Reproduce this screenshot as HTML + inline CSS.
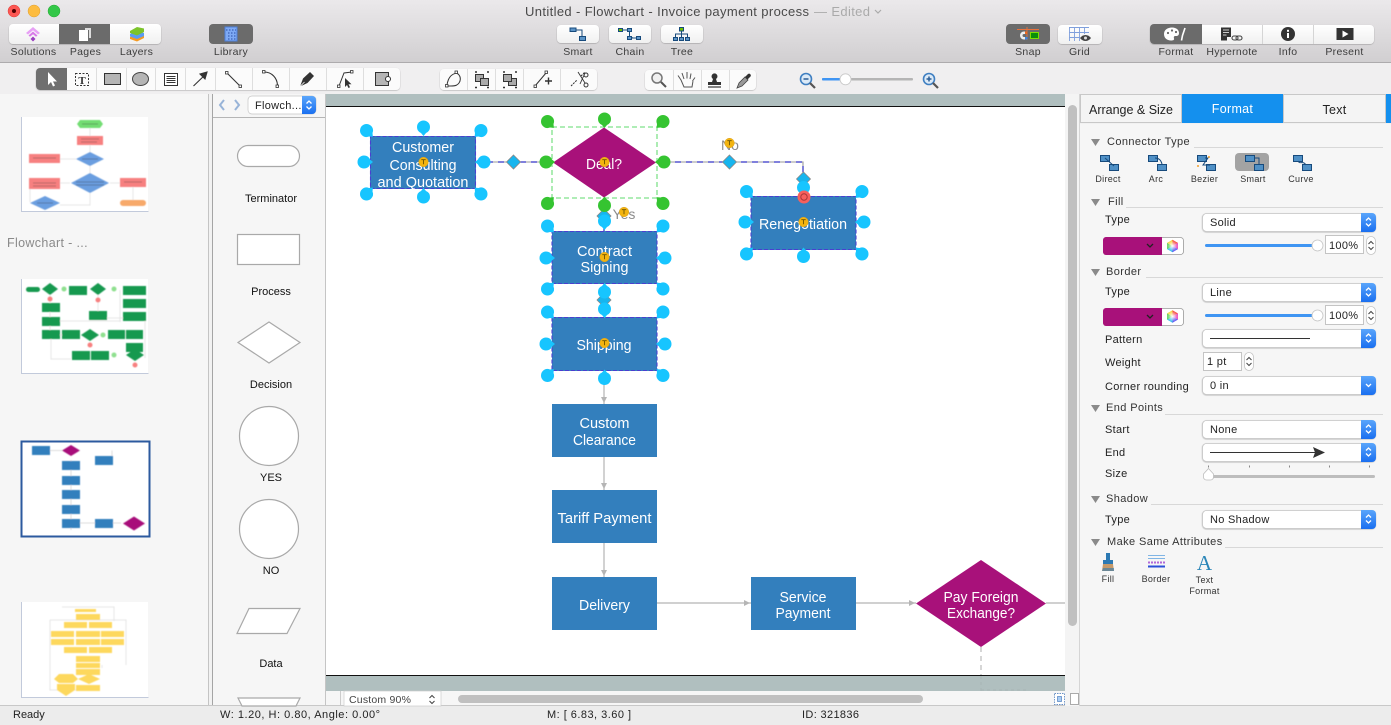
<!DOCTYPE html>
<html><head><meta charset="utf-8"><title>Flowchart</title>
<style>
html,body{margin:0;padding:0;background:#f6f6f6;width:1391px;height:725px;overflow:hidden}
svg{display:block;position:absolute;left:0;top:0}
text{font-family:"Liberation Sans",sans-serif;}
.tb{font-size:10.5px;fill:#3c3c3c;text-anchor:middle;letter-spacing:.3px}
.p{font-size:11px;fill:#222;letter-spacing:.3px}
.h{font-size:11px;fill:#333;letter-spacing:.4px}
.s{font-size:9px;fill:#333;text-anchor:middle;letter-spacing:.3px}
.l{font-size:11px;fill:#111;text-anchor:middle}
.n{font-size:15px;fill:#fff;text-anchor:middle}
.st{font-size:11px;fill:#222}
</style></head><body>
<svg width="1391" height="725" viewBox="0 0 1391 725" xmlns="http://www.w3.org/2000/svg">
<defs>
<linearGradient id="tg" x1="0" y1="0" x2="0" y2="1"><stop offset="0" stop-color="#ebe9eb"/><stop offset="1" stop-color="#d1cfd1"/></linearGradient>
<linearGradient id="bg" x1="0" y1="0" x2="0" y2="1"><stop offset="0" stop-color="#fff"/><stop offset="1" stop-color="#f0f0f0"/></linearGradient>
<linearGradient id="sb" x1="0" y1="0" x2="0" y2="1"><stop offset="0" stop-color="#5aa5fb"/><stop offset="1" stop-color="#1a6ff0"/></linearGradient>
<filter id="bl"><feGaussianBlur stdDeviation=".45"/></filter>
<filter id="sh" x="-5%" y="-20%" width="110%" height="140%"><feDropShadow dx="0" dy=".5" stdDeviation=".4" flood-color="#000" flood-opacity=".3"/></filter>
<g id="d"><path d="M-6.5 0a6.5 6.5 0 1 1 13 0a6.5 6.5 0 0 1-4 6l-2.500 3-2.500-3a6.500 6.500 0 0 1-4-6z"/></g>
<g id="T"><circle r="4.800" fill="#f3b40f" stroke="#d9a020" stroke-width=".5"/><path d="M-2.200-2.300h4.400M0-2.300v4.600" stroke="#6b5200" stroke-width=".9" fill="none"/></g>
<g id="dm"><path d="M0-7L7 0 0 7-7 0z" fill="#17b5ee" stroke="#888" stroke-width=".8"/></g>
<g id="updn"><path d="M-2.500-1.500L0-4l2.500 2.500M-2.500 1.500L0 4l2.500-2.500" fill="none" stroke="#fff" stroke-width="1.300"/></g>
<g id="updd"><path d="M-2.500-1.500L0-4l2.500 2.500M-2.500 1.500L0 4l2.500-2.500" fill="none" stroke="#444" stroke-width="1"/></g>
<g id="bx"><rect width="9" height="6" fill="#4f90c6" stroke="#174a7c"/></g>
<radialGradient id="wc"><stop offset="0" stop-color="#fff"/><stop offset=".3" stop-color="#fff" stop-opacity=".7"/><stop offset="1" stop-color="#fff" stop-opacity="0"/></radialGradient>
<g id="wh">
<path d="M0 0L0-6.200 5.400-3.100z" fill="#f5352b"/><path d="M0 0L5.400-3.100 5.400 3.100z" fill="#e32bb0"/><path d="M0 0L5.400 3.100 0 6.200z" fill="#4a3ff0"/><path d="M0 0L0 6.200-5.400 3.100z" fill="#1fb5e8"/><path d="M0 0L-5.400 3.100-5.400-3.100z" fill="#3fc83f"/><path d="M0 0L-5.400-3.100 0-6.200z" fill="#f5d12b"/>
<circle r="6.100" fill="url(#wc)"/>
</g>
</defs>

<!-- base bands -->
<rect width="1391" height="62" fill="url(#tg)"/>
<rect y="62" width="1391" height="1" fill="#adabad"/>
<rect y="63" width="1391" height="31" fill="#f0eff0"/>
<rect y="94" width="1391" height="612" fill="#f6f6f6"/>
<rect y="706" width="1391" height="19" fill="#ececec"/>

<!-- traffic lights -->
<circle cx="14" cy="11" r="6" fill="#fc5753" stroke="#df3d38" stroke-width=".5"/><circle cx="14" cy="11" r="2" fill="#4d0000"/>
<circle cx="34" cy="11" r="6" fill="#fdbc40" stroke="#de9f34" stroke-width=".5"/>
<circle cx="54" cy="11" r="6" fill="#33c748" stroke="#27aa35" stroke-width=".5"/>
<text x="525" y="16" font-size="13" fill="#4a4a4a" textLength="284" lengthAdjust="spacing">Untitled - Flowchart - Invoice payment process</text>
<text x="814" y="16" font-size="13" fill="#aaa" textLength="56" lengthAdjust="spacing">— Edited</text>
<path d="M875 10l3 3 3-3" fill="none" stroke="#aaa" stroke-width="1.200"/>

<!-- main toolbar buttons -->
<rect x="9" y="24" width="152" height="20" rx="4" fill="url(#bg)" filter="url(#sh)"/>
<rect x="59" y="24" width="51" height="20" fill="#6b6b6b"/>
<rect x="209" y="24" width="44" height="20" rx="4" fill="#6b6b6b"/>
<rect x="557" y="25" width="42" height="18" rx="4" fill="url(#bg)" filter="url(#sh)"/>
<rect x="609" y="25" width="42" height="18" rx="4" fill="url(#bg)" filter="url(#sh)"/>
<rect x="661" y="25" width="42" height="18" rx="4" fill="url(#bg)" filter="url(#sh)"/>
<rect x="1006" y="24" width="44" height="20" rx="4" fill="#6b6b6b"/>
<rect x="1058" y="25" width="44" height="19" rx="4" fill="url(#bg)" filter="url(#sh)"/>
<rect x="1150" y="25" width="224" height="19" rx="4" fill="url(#bg)" filter="url(#sh)"/>
<path d="M1154 24h48v20h-48a4 4 0 0 1-4-4v-12a4 4 0 0 1 4-4z" fill="#6b6b6b"/>
<path d="M1262.500 25v19M1313.500 25v19" stroke="#d5d5d5"/>

<!-- solutions icon -->
<path d="M33 27l7 6-2 1.500-5-4.200-5 4.200-2-1.500z" fill="#e7a0f5"/>
<path d="M33 31.500l4.500 4-1.500 1.200-3-2.500-3 2.500-1.500-1.200z" fill="#d77ae8"/>
<path d="M33 36.500l2.500 2.500-2.500 2.500-2.500-2.500z" fill="#9b3fc0"/>
<!-- pages -->
<path d="M85 28h6v10h-2V30h-4z" fill="#ddd"/><path d="M79 30h9v11h-9z" fill="#fff"/>
<!-- layers -->
<path d="M130 37l7-3 7 2v2l-7 3.500-7-2.500z" fill="#f59a23"/><path d="M130 34l7-3 7 2v3l-7 3-7-2.500z" fill="#5b9bf5"/><path d="M130 31l7-4 7 1.500V32l-7 3.500-7-2.500z" fill="#7cc42b"/>
<!-- library -->
<rect x="225" y="27" width="12" height="14" fill="#7eaaf5" stroke="#4d7fd8"/>
<path d="M226 30h10" stroke="#2a4fa8" stroke-width=".9" stroke-dasharray="1.500 1.500"/>
<path d="M228 33h8M228 36h8M228 39h8" stroke="#2a4fa8" stroke-width=".9" stroke-dasharray="1.500 1.500"/>
<!-- smart -->
<rect x="570" y="28" width="6" height="3.500" fill="#5c94c7" stroke="#174a7c"/><path d="M576 30h6v6" fill="none" stroke="#174a7c"/><rect x="579.500" y="36.500" width="6" height="4" fill="#5c94c7" stroke="#174a7c"/>
<!-- chain -->
<rect x="618.500" y="28.500" width="4" height="3" fill="#6fc000" stroke="#174a7c"/><rect x="627.500" y="28.500" width="4" height="3" fill="#5c94c7" stroke="#174a7c"/><path d="M622 30h5M629.500 31.500v6h3" stroke="#174a7c" fill="none"/><rect x="627.500" y="36.500" width="4" height="3" fill="#5c94c7" stroke="#174a7c"/><rect x="636.500" y="36.500" width="4" height="3" fill="#5c94c7" stroke="#174a7c"/><path d="M631.500 38h5" stroke="#174a7c"/>
<!-- tree -->
<rect x="679.500" y="27.500" width="4" height="3.500" fill="#6fc000" stroke="#174a7c"/><path d="M681.500 31v3M675.500 37v-3h12v3M681.500 34v3" fill="none" stroke="#174a7c"/><rect x="673.500" y="37.500" width="4" height="3" fill="#5c94c7" stroke="#174a7c"/><rect x="679.500" y="37.500" width="4" height="3" fill="#5c94c7" stroke="#174a7c"/><rect x="685.500" y="37.500" width="4" height="3" fill="#5c94c7" stroke="#174a7c"/>
<!-- snap -->
<path d="M1017 29.500h22M1027 27v13" stroke="#e8713c" stroke-width=".9"/>
<path d="M1027 31.500h-3a4 4 0 0 0 0 8h3v-2.500h-3a1.500 1.500 0 0 1 0-3h3z" fill="#eee"/><rect x="1025" y="31.500" width="2.500" height="2.500" fill="#f06a1e"/><rect x="1025" y="37" width="2.500" height="2.500" fill="#3f86e0"/>
<rect x="1030.500" y="32.500" width="8" height="6" fill="#0a8f0a" stroke="#7fe000"/>
<!-- grid -->
<path d="M1069.500 27v14M1074.500 27v14M1079.500 27v14M1084.500 27v7M1069 27.500h20M1069 32.500h20M1069 37.500h11" stroke="#7f9fdc" stroke-width=".9"/>
<path d="M1080 38c3-4 8-4 11 0-3 4-8 4-11 0z" fill="#444"/><circle cx="1085.500" cy="38" r="1.500" fill="#ddd"/>
<!-- format -->
<path d="M1164 34c0-4 3.500-6.500 8-6.500s7 2.500 7 5.500-2 3-3.500 3-2 1-1.500 2.500-1 2-3 2c-4 0-7-2.500-7-6.500z" fill="#fff"/>
<circle cx="1168" cy="33" r="1.100" fill="#666"/><circle cx="1172" cy="30.500" r="1.100" fill="#666"/><circle cx="1176" cy="32" r="1.100" fill="#666"/>
<path d="M1185 28l-2.500 7.500-1 5" stroke="#fff" stroke-width="1.600" fill="none"/>
<!-- hypernote -->
<path d="M1221 27.500h10V37h-4v3.500h-6z" fill="#333"/><path d="M1223 30h6M1223 32.500h6M1223 35h3.500" stroke="#fff" stroke-width=".8"/>
<rect x="1232" y="36" width="6" height="4" rx="2" fill="none" stroke="#444" stroke-width="1.100"/><rect x="1236" y="36" width="6" height="4" rx="2" fill="none" stroke="#444" stroke-width="1.100"/>
<!-- info -->
<circle cx="1288" cy="34" r="7" fill="#333"/><rect x="1287" y="33" width="2" height="5" fill="#fff"/><rect x="1287" y="29.800" width="2" height="2" fill="#fff"/>
<!-- present -->
<rect x="1336.500" y="28" width="17" height="12" fill="#333"/><path d="M1342.500 30.500l6 3.500-6 3.500z" fill="#fff"/>

<text x="33.500" y="55" class="tb">Solutions</text><text x="85.500" y="55" class="tb">Pages</text><text x="136.500" y="55" class="tb">Layers</text><text x="231" y="55" class="tb">Library</text>
<text x="578" y="55" class="tb">Smart</text><text x="630" y="55" class="tb">Chain</text><text x="682" y="55" class="tb">Tree</text>
<text x="1028" y="55" class="tb">Snap</text><text x="1079.500" y="55" class="tb">Grid</text><text x="1176" y="55" class="tb">Format</text><text x="1232" y="55" class="tb">Hypernote</text><text x="1288" y="55" class="tb">Info</text><text x="1344.500" y="55" class="tb">Present</text>

<!-- second toolbar -->
<g filter="url(#sh)"><rect x="36" y="68" width="364" height="22" rx="4" fill="#fbfbfb"/><rect x="440" y="69" width="157" height="21" rx="4" fill="#fbfbfb"/><rect x="645" y="70" width="111" height="20" rx="4" fill="#fbfbfb"/></g>
<path d="M40 68h27v22H40a4 4 0 0 1-4-4V72a4 4 0 0 1 4-4z" fill="#6f6f6f"/>
<path d="M96.500 68v22M126.500 68v22M155.500 68v22M185.500 68v22M215.500 68v22M252.500 68v22M289.500 68v22M326.500 68v22M363.500 68v22M467.500 69v21M495.500 69v21M523.500 69v21M560.500 69v21M673.500 70v20M701.500 70v20M729.500 70v20" stroke="#dedede"/>
<path d="M48 72v13l3-3 2 4.500 2-1-2-4h4z" fill="#fff"/>
<rect x="75.500" y="73.500" width="13" height="12" fill="none" stroke="#333" stroke-dasharray="2 1.500"/><text x="82" y="84" font-size="11" font-weight="bold" fill="#333" text-anchor="middle" style="font-family:'Liberation Serif',serif">T</text>
<rect x="104.500" y="73.500" width="16" height="11" fill="#b5b5b5" stroke="#333"/>
<ellipse cx="140.500" cy="79" rx="8" ry="6.500" fill="#b5b5b5" stroke="#444"/>
<rect x="164.500" y="73.500" width="13" height="12" fill="#fff" stroke="#333"/><path d="M166.500 76.500h9M166.500 78.500h9M166.500 80.500h9M166.500 82.500h9" stroke="#333" stroke-width=".9"/>
<path d="M193.500 86L207 73M207 72l-7 2 5 5z" fill="#333" stroke="#333" stroke-width="1.100"/>
<path d="M227 73l13 13" stroke="#333" stroke-width="1.100"/><rect x="225.500" y="71.500" width="2.500" height="2.500" fill="#fff" stroke="#333" stroke-width=".8"/><rect x="239" y="85" width="2.500" height="2.500" fill="#fff" stroke="#333" stroke-width=".8"/>
<path d="M264 72c8 0 13 6 13.500 13" fill="none" stroke="#333" stroke-width="1.100"/><rect x="262.500" y="70.500" width="2.500" height="2.500" fill="#fff" stroke="#333" stroke-width=".8"/><rect x="276" y="85" width="2.500" height="2.500" fill="#fff" stroke="#333" stroke-width=".8"/>
<path d="M300 86.500l3-8 7-6.500 4 4-6.500 7z" fill="#333"/><path d="M300 86.500l4.500-4.500" stroke="#fff" stroke-width=".8"/>
<path d="M339 86l5-13 8-1" fill="none" stroke="#333"/><rect x="337.500" y="85" width="2.500" height="2.500" fill="#fff" stroke="#333" stroke-width=".8"/><rect x="350.500" y="70.500" width="2.500" height="2.500" fill="#fff" stroke="#333" stroke-width=".8"/><path d="M345 78v9l2-2 1.500 3 1.500-.7-1.500-3h3z" fill="#333"/>
<rect x="375.500" y="72.500" width="13" height="13" fill="#b5b5b5" stroke="#333"/><circle cx="388" cy="79" r="2.500" fill="#fff" stroke="#333"/>
<path d="M447 86c0-4 2-9 5-11s5-2.500 7 0 1.500 6 0 8-3 3-8 3z" fill="none" stroke="#333"/><rect x="445.500" y="84.500" width="2.500" height="2.500" fill="#fff" stroke="#333" stroke-width=".8"/><rect x="455" y="71" width="2.500" height="2.500" fill="#fff" stroke="#333" stroke-width=".8"/>
<rect x="475.500" y="74.500" width="8" height="7" fill="#aaa" stroke="#333"/><rect x="480.500" y="78.500" width="8" height="7" fill="#aaa" stroke="#333"/><path d="M475 72h2M487 72h2M475 87.500h2M487 87.500h2" stroke="#333" stroke-width="1.500"/>
<rect x="508.500" y="78.500" width="8" height="7" fill="#aaa" stroke="#333"/><rect x="503.500" y="74.500" width="8" height="7" fill="#aaa" stroke="#333"/><path d="M503 72h2M515 72h2M503 87.500h2M515 87.500h2" stroke="#333" stroke-width="1.500"/>
<path d="M535 86l11-13" stroke="#333"/><rect x="534" y="85" width="2.500" height="2.500" fill="#fff" stroke="#333" stroke-width=".8"/><rect x="545" y="71" width="2.500" height="2.500" fill="#fff" stroke="#333" stroke-width=".8"/><path d="M545 81h7M548.500 77.500v7" stroke="#333" stroke-width="1.400"/>
<path d="M571 86l6-6M581 76l4-4" stroke="#333" stroke-dasharray="2 1"/><circle cx="586" cy="75" r="2" fill="none" stroke="#333"/><circle cx="586" cy="85" r="2" fill="none" stroke="#333"/><path d="M578 72l7 11M585 73l-5 11" stroke="#333" stroke-width=".9"/>
<circle cx="657" cy="78" r="5" fill="#f0f0f0" stroke="#777" stroke-width="1.500"/><path d="M661 82l5 5" stroke="#555" stroke-width="2"/>
<path d="M681 80l-3-4.500M684 79l-2-6M687 78.500V72M690 79l1-5.500M692.500 81l2.500-3.500M681 80l3 7h8l1-6" stroke="#555" fill="none"/>
<path d="M708 87h13" stroke="#333" stroke-width="1.200"/><path d="M708 85v-3h4l1-3a3 3 0 1 1 3 0l1 3h4v3z" fill="#333"/>
<path d="M737 88l2-5 6-6 3 3-6 6z" fill="#999" stroke="#444" stroke-width=".8"/><path d="M745 77l3-3a1.800 1.800 0 0 1 2.500 2.500l-3 3z" fill="#333"/>
<!-- zoom slider -->
<circle cx="806" cy="79" r="5.500" fill="#dceaf7" stroke="#3f7fc1" stroke-width="1.600"/><path d="M803.500 79h5" stroke="#2b5d96" stroke-width="1.500"/><path d="M810 83l5 5" stroke="#555" stroke-width="2.200"/>
<rect x="822" y="78" width="91" height="2.500" rx="1" fill="#b5b5b5"/><rect x="822" y="78" width="20" height="2.500" rx="1" fill="#3f95f3"/><circle cx="845.500" cy="79.300" r="5.500" fill="#fff" stroke="#c8c8c8" stroke-width=".8"/>
<circle cx="929" cy="79" r="5.500" fill="#dceaf7" stroke="#3f7fc1" stroke-width="1.600"/><path d="M926.500 79h5M929 76.500v5" stroke="#2b5d96" stroke-width="1.500"/><path d="M933 83l5 5" stroke="#555" stroke-width="2.200"/>

<!-- panels -->
<rect x="208" y="94" width="1" height="612" fill="#c4c4c4"/>
<rect x="209" y="94" width="3" height="612" fill="#f2f2f2"/>
<rect x="212" y="94" width="1" height="612" fill="#a5a5a5"/>
<rect x="325" y="94" width="1" height="612" fill="#c5c5c5"/>
<rect x="0" y="705" width="1391" height="1" fill="#c8c8c8"/>
<rect x="213" y="117" width="112" height="1" fill="#b5b5b5"/>

<!-- page thumbs -->
<text x="7" y="247" font-size="12.500" fill="#8a8a8a" letter-spacing=".35">Flowchart - ...</text>
<rect x="21" y="117" width="127" height="94" fill="#fff"/><path d="M21.500 117v94.500H148.500" fill="none" stroke="#c2cadb"/>
<g filter="url(#bl)">
<path d="M90 128v45M60 159h16M60 183h10M110 183h10M133 187v13M90 193v12H60M30 188v14" stroke="#e6e6e6" fill="none"/>
<path d="M77 124l3-4h20l3 4-3 4H80z" fill="#73dd73"/><rect x="77" y="136" width="26" height="9" fill="#f78080"/><path d="M76 159l14-7 14 7-14 7z" fill="#6b9ee0"/><rect x="29" y="154" width="31" height="9" fill="#f78080"/><path d="M71 183l19-10 19 10-19 10z" fill="#6b9ee0"/><rect x="29" y="178" width="31" height="11" fill="#f78080"/><rect x="120" y="178" width="26" height="9" fill="#f78080"/><path d="M30 203l15-7 15 7-15 7z" fill="#6b9ee0"/><rect x="120" y="200" width="26" height="6" rx="3" fill="#f7a96b"/>
<path d="M82 124h16M81 139h18M81 142h16M82 159h16M33 158h23M76 182h28M76 185h28M33 183h23M33 186h23M124 182h18M37 203h16" stroke="#333" stroke-width=".7" opacity=".45" fill="none"/>
</g>
<rect x="21" y="279" width="127" height="94" fill="#fff"/><path d="M21.500 279v94.500H148.500" fill="none" stroke="#c2cadb"/>
<g filter="url(#bl)">
<path d="M50 295v35M98 295v16M120 290v32M60 335h20M51 339v20h20M90 318h55v40M51 321h70" stroke="#e6e6e6" fill="none"/>
<g fill="#17994f">
<rect x="26" y="287" width="14" height="5" rx="2.500"/><path d="M42 289l8-6 8 6-8 6z"/><rect x="69" y="286" width="18" height="9"/><path d="M90 289l8-6 8 6-8 6z"/><rect x="123" y="286" width="23" height="9"/><rect x="123" y="299" width="23" height="9"/><rect x="123" y="312" width="23" height="9"/><rect x="42" y="303" width="18" height="9"/><rect x="42" y="317" width="18" height="9"/><rect x="89" y="311" width="18" height="9"/><rect x="42" y="330" width="18" height="9"/><rect x="62" y="330" width="18" height="9"/><path d="M81 335l9-6 9 6-9 6z"/><rect x="108" y="330" width="17" height="9"/><rect x="126" y="330" width="17" height="9"/><rect x="126" y="343" width="17" height="9"/><rect x="72" y="351" width="18" height="9"/><rect x="91" y="351" width="18" height="9"/><path d="M126 355l9-6 9 6-9 6z"/>
</g>
<circle cx="50" cy="299" r="2.500" fill="#f78080"/><circle cx="98" cy="300" r="2.500" fill="#f78080"/><circle cx="90" cy="345" r="2.500" fill="#f78080"/><circle cx="135" cy="365" r="2.500" fill="#f78080"/>
<circle cx="64" cy="289" r="2.500" fill="#8fe08f"/><circle cx="114" cy="289" r="2.500" fill="#8fe08f"/><circle cx="103" cy="335" r="2.500" fill="#8fe08f"/><circle cx="114" cy="355" r="2.500" fill="#8fe08f"/>
</g>
<rect x="21.500" y="441.500" width="128" height="95" fill="#fff" stroke="#2c5a9f" stroke-width="2"/>
<g filter="url(#bl)" fill="#337fbd">
<path d="M50 450.500h30M71 460v70M71 523h50M112 450.500v12" stroke="#ddd" stroke-width="1" fill="none"/>
<rect x="32" y="446" width="18" height="9"/><path d="M62 450.500l9-5.500 9 5.500-9 5.500z" fill="#a8117a"/><rect x="62" y="461" width="18" height="9"/><rect x="95" y="456" width="18" height="9"/><rect x="62" y="476" width="18" height="9"/><rect x="62" y="490" width="18" height="9"/><rect x="62" y="505" width="18" height="9"/><rect x="62" y="519" width="18" height="9"/><rect x="95" y="519" width="18" height="9"/><path d="M123 523.500l11-7 11 7-11 7z" fill="#a8117a"/>
</g>
<rect x="21" y="602" width="127" height="95" fill="#fff"/><path d="M21.500 602v95.500H148.500" fill="none" stroke="#c2cadb"/>
<g filter="url(#bl)">
<path d="M62 607h52v14M50 620h76v45M50 620v70h44M102 665v3" fill="none" stroke="#e5e5e5"/>
<g fill="#fdd85d">
<rect x="75" y="609" width="21" height="3" /><rect x="76" y="614" width="24" height="6"/><rect x="64" y="622" width="23" height="6"/><rect x="89" y="622" width="23" height="6"/><rect x="51" y="631" width="23" height="6"/><rect x="76" y="631" width="24" height="6"/><rect x="101" y="631" width="23" height="6"/><rect x="51" y="639" width="23" height="6"/><rect x="76" y="639" width="24" height="6"/><rect x="101" y="639" width="23" height="6"/><rect x="64" y="647" width="23" height="6"/><rect x="89" y="647" width="23" height="6"/><rect x="76" y="656" width="24" height="6"/><rect x="76" y="663" width="24" height="5"/><rect x="76" y="669" width="24" height="6"/><path d="M54 679l5-5h14l5 5-5 4H59zM78 679l11-5 11 5-11 5z"/><path d="M57 684h18v6l-9 6-9-6z"/><rect x="76" y="685" width="24" height="6"/>
</g></g>

<!-- library panel -->
<path d="M224 100l-4 5 4 5" fill="none" stroke="#98b4d8" stroke-width="2"/><path d="M235 100l4 5-4 5" fill="none" stroke="#98b4d8" stroke-width="2"/>
<rect x="248" y="96" width="68" height="18" rx="4" fill="#fff" stroke="#c5c5c5" stroke-width=".7"/>
<path d="M302 96h10a4 4 0 0 1 4 4v10a4 4 0 0 1-4 4h-10z" fill="url(#sb)"/><use href="#updn" x="309" y="105"/>
<text x="255" y="109" font-size="11" fill="#222" letter-spacing=".3">Flowch...</text>
<rect x="237.500" y="145.500" width="62" height="21" rx="10.500" fill="#fff" stroke="#a9a9a9" stroke-width="1.200"/>
<rect x="237.500" y="234.500" width="62" height="30" fill="#fff" stroke="#a9a9a9" stroke-width="1.200"/>
<path d="M238 342.500l31-20.500 31 20.500-31 20.500z" fill="#fff" stroke="#a9a9a9" stroke-width="1.200"/>
<circle cx="269" cy="436" r="29.500" fill="#fff" stroke="#a9a9a9" stroke-width="1.200"/>
<circle cx="269" cy="529" r="29.500" fill="#fff" stroke="#a9a9a9" stroke-width="1.200"/>
<path d="M249 608.500h51l-13 25h-50z" fill="#fff" stroke="#a9a9a9" stroke-width="1.200"/>
<path d="M238 698h62l-4 8h-54z" fill="#fff" stroke="#a9a9a9" stroke-width="1.200"/>
<text x="271" y="202" class="l">Terminator</text><text x="271" y="295" class="l">Process</text><text x="271" y="388" class="l">Decision</text><text x="271" y="481" class="l">YES</text><text x="271" y="574" class="l">NO</text><text x="271" y="667" class="l">Data</text>

<!-- canvas -->
<rect x="326" y="94" width="739" height="597" fill="#b0bfbf"/>
<rect x="326" y="107" width="739" height="568" fill="#fff"/>
<rect x="326" y="106" width="739" height="1" fill="#111"/>
<rect x="326" y="675" width="739" height="1" fill="#111"/>
<rect x="1065" y="94" width="15" height="612" fill="#f4f4f4"/>
<rect x="1079" y="94" width="1" height="612" fill="#d5d5d5"/>
<rect x="1068" y="105" width="9" height="521" rx="4.500" fill="#c0c0c0"/>
<!-- bottom bar -->
<rect x="326" y="691" width="739" height="14" fill="#f6f6f6"/>
<rect x="340" y="691" width="1" height="14" fill="#ccc"/>
<rect x="344" y="691" width="97" height="15" fill="#fff" stroke="#ccc" stroke-width=".7"/>
<text x="349" y="703" font-size="10.500" fill="#444" letter-spacing=".2">Custom 90%</text>
<use href="#updd" x="432" y="699.500"/>
<rect x="458" y="695" width="465" height="8" rx="4" fill="#c0c0c0"/>
<rect x="1054.500" y="693.500" width="10" height="11" fill="#fff" stroke="#3a6fb5" stroke-width=".7" stroke-dasharray="1.500 1"/><rect x="1057.500" y="696.500" width="4" height="5" fill="#a9cdf5" stroke="#3a6fb5" stroke-width=".6"/>
<rect x="1070.500" y="693.500" width="8" height="11" fill="#fff" stroke="#aaa"/>

<!-- connectors plain -->
<path d="M604 371v33M604 457v33M604 543v34M657 603h94M856 603h60M1046 603h19" stroke="#b5b5b5" stroke-width="1.200" fill="none"/>
<path d="M601 397l3 6 3-6zM601 483l3 6 3-6zM601 570l3 6 3-6zM744 600l6 3-6 3zM909 600l6 3-6 3z" fill="#b5b5b5"/>
<path d="M981 647v28" stroke="#c8c8c8" stroke-width="1.500" stroke-dasharray="5 4"/><path d="M981 676v15M981 690h46" stroke="#a8b6b6" stroke-dasharray="3 3"/>
<!-- connectors selected -->
<path d="M476 162h70M664 162h139v34M604 205v26M604 284v33" stroke="#9a9a9a" stroke-width="1.100" fill="none"/>
<path d="M476 162h70M664 162h139v34M604 205v26M604 284v33" stroke="#3434c8" stroke-width="1.200" stroke-dasharray="6 5" fill="none"/>

<!-- nodes -->
<g fill="#337fbd">
<rect x="370" y="136" width="106" height="53"/><rect x="552" y="231" width="105" height="53"/><rect x="552" y="317" width="105" height="54"/><rect x="751" y="196" width="105" height="54"/>
<rect x="552" y="404" width="105" height="53"/><rect x="552" y="490" width="105" height="53"/><rect x="552" y="577" width="105" height="53"/><rect x="751" y="577" width="105" height="53"/>
</g>
<path d="M553 162.500L604 127.500l52 35-52 35z" fill="#a8117a"/>
<path d="M916 603.500L981 560l65 43.500-65 43.500z" fill="#a8117a"/>
<g fill="none" stroke="#4a3fd0" stroke-width="1.100" stroke-dasharray="4 2">
<rect x="370.500" y="136.500" width="105" height="52"/><rect x="552" y="231.500" width="105" height="52"/><rect x="552" y="317.500" width="105" height="53"/><rect x="751" y="196.500" width="105" height="53"/>
</g>
<rect x="552" y="127" width="105" height="71" fill="none" stroke="#7fe28a" stroke-width="1.300" stroke-dasharray="5 3"/>

<text class="n" x="423" y="152" textLength="62" lengthAdjust="spacingAndGlyphs">Customer</text>
<text class="n" x="423" y="170" textLength="67" lengthAdjust="spacingAndGlyphs">Consulting</text>
<text class="n" x="423" y="187" textLength="91" lengthAdjust="spacingAndGlyphs">and Quotation</text>
<text class="n" x="604" y="169" textLength="36" lengthAdjust="spacingAndGlyphs">Deal?</text>
<text class="n" x="604.500" y="256" textLength="55" lengthAdjust="spacingAndGlyphs">Contract</text>
<text class="n" x="604.500" y="272" textLength="48" lengthAdjust="spacingAndGlyphs">Signing</text>
<text class="n" x="604" y="350" textLength="55" lengthAdjust="spacingAndGlyphs">Shipping</text>
<text class="n" x="803" y="229" textLength="88" lengthAdjust="spacingAndGlyphs">Renegotiation</text>
<text class="n" x="604.500" y="428" textLength="50" lengthAdjust="spacingAndGlyphs">Custom</text>
<text class="n" x="604.500" y="445" textLength="63" lengthAdjust="spacingAndGlyphs">Clearance</text>
<text class="n" x="604.500" y="523" textLength="94" lengthAdjust="spacingAndGlyphs">Tariff Payment</text>
<text class="n" x="604.500" y="610" textLength="51" lengthAdjust="spacingAndGlyphs">Delivery</text>
<text class="n" x="803" y="602" textLength="47" lengthAdjust="spacingAndGlyphs">Service</text>
<text class="n" x="803" y="618" textLength="55" lengthAdjust="spacingAndGlyphs">Payment</text>
<text class="n" x="981" y="602" textLength="75" lengthAdjust="spacingAndGlyphs">Pay Foreign</text>
<text class="n" x="981" y="618" textLength="68" lengthAdjust="spacingAndGlyphs">Exchange?</text>
<text x="624" y="219" font-size="14" fill="#8c8c8c" text-anchor="middle">Yes</text>
<text x="730" y="150" font-size="14" fill="#8c8c8c" text-anchor="middle">No</text>

<!-- mid diamonds -->
<use href="#dm" x="513.500" y="162"/><use href="#dm" x="729.500" y="162"/><use href="#dm" x="803.500" y="179"/><use href="#dm" x="604" y="216"/><use href="#dm" x="604" y="300"/>

<!-- blue handles -->
<g fill="#17c5ff">
<use href="#d" transform="translate(366.500 130.500) rotate(-45)"/>
<use href="#d" transform="translate(481 130.500) rotate(45)"/>
<use href="#d" transform="translate(366.500 194) rotate(-135)"/>
<use href="#d" transform="translate(481 194) rotate(135)"/>
<use href="#d" transform="translate(423.500 127)"/>
<use href="#d" transform="translate(423.500 197) rotate(180)"/>
<use href="#d" transform="translate(364 162) rotate(-90)"/>
<use href="#d" transform="translate(484 162) rotate(90)"/>
<use href="#d" transform="translate(547.500 226) rotate(-45)"/>
<use href="#d" transform="translate(663 226) rotate(45)"/>
<use href="#d" transform="translate(547.500 289) rotate(-135)"/>
<use href="#d" transform="translate(663 289) rotate(135)"/>
<use href="#d" transform="translate(604.500 221)"/>
<use href="#d" transform="translate(604.500 292) rotate(180)"/>
<use href="#d" transform="translate(546 258) rotate(-90)"/>
<use href="#d" transform="translate(665 258) rotate(90)"/>
<use href="#d" transform="translate(547.500 312) rotate(-45)"/>
<use href="#d" transform="translate(663 312) rotate(45)"/>
<use href="#d" transform="translate(547.500 375.500) rotate(-135)"/>
<use href="#d" transform="translate(663 375.500) rotate(135)"/>
<use href="#d" transform="translate(604.500 309)"/>
<use href="#d" transform="translate(604.500 378.500) rotate(180)"/>
<use href="#d" transform="translate(546 344) rotate(-90)"/>
<use href="#d" transform="translate(665 344) rotate(90)"/>
<use href="#d" transform="translate(746.500 191.500) rotate(-45)"/>
<use href="#d" transform="translate(862 191.500) rotate(45)"/>
<use href="#d" transform="translate(746.500 254) rotate(-135)"/>
<use href="#d" transform="translate(862 254) rotate(135)"/>
<use href="#d" transform="translate(803.500 187.500)"/>
<use href="#d" transform="translate(803.500 256.500) rotate(180)"/>
<use href="#d" transform="translate(745 222) rotate(-90)"/>
<use href="#d" transform="translate(864 222) rotate(90)"/>
</g>
<g fill="#35c431">
<use href="#d" transform="translate(547.500 121.500) rotate(-45)"/>
<use href="#d" transform="translate(663 121.500) rotate(45)"/>
<use href="#d" transform="translate(547.500 203.500) rotate(-135)"/>
<use href="#d" transform="translate(663 203.500) rotate(135)"/>
<use href="#d" transform="translate(604.500 119)"/>
<use href="#d" transform="translate(604.500 205.500) rotate(180)"/>
<use href="#d" transform="translate(546 162) rotate(-90)"/>
<use href="#d" transform="translate(664 162) rotate(90)"/>
</g>
<circle cx="804" cy="197" r="6.500" fill="#f7605c"/><circle cx="804" cy="197" r="3.200" fill="none" stroke="#a83838" stroke-width="1"/>
<use href="#T" x="423.500" y="162"/><use href="#T" x="604.500" y="162"/><use href="#T" x="624" y="212"/><use href="#T" x="604.500" y="257"/><use href="#T" x="604.500" y="343"/><use href="#T" x="729.500" y="143"/><use href="#T" x="803.500" y="222"/>

<!-- right panel tabs -->
<rect x="1080" y="94" width="311" height="30" fill="#f1f1f1"/>
<rect x="1080.500" y="94.500" width="101" height="28" fill="#f4f4f4" stroke="#c8c8c8"/>
<rect x="1182" y="94" width="101" height="29" fill="#1490ee"/>
<rect x="1283.500" y="94.500" width="102" height="28" fill="#f4f4f4" stroke="#c8c8c8"/>
<rect x="1386" y="94" width="5" height="29" fill="#1490ee"/>
<text x="1089" y="114" font-size="12.500" fill="#222" textLength="84" lengthAdjust="spacing">Arrange &amp; Size</text>
<text x="1232.500" y="113" font-size="12.500" fill="#fff" text-anchor="middle" letter-spacing=".3">Format</text>
<text x="1334.500" y="114" font-size="12.500" fill="#222" text-anchor="middle" letter-spacing=".3">Text</text>

<!-- section heads -->
<g fill="#8a8a8a"><path d="M1091 139h9l-4.500 7zM1091 199h9l-4.500 7zM1091 269h9l-4.500 7zM1091 405h9l-4.500 7zM1091 496h9l-4.500 7zM1091 539h9l-4.500 7z"/></g>
<g stroke="#d8d8d8"><path d="M1194 147.500h189M1126 207.500h257M1146 277.500h237M1165 414.500h218M1151 504.500h232M1225 547.500h158"/></g>
<text x="1107" y="145" class="h">Connector Type</text>
<text x="1108" y="205" class="h">Fill</text>
<text x="1106" y="275" class="h">Border</text>
<text x="1106" y="411" class="h">End Points</text>
<text x="1106" y="502" class="h">Shadow</text>
<text x="1107" y="545" class="h">Make Same Attributes</text>

<!-- connector types -->
<rect x="1235" y="153" width="34" height="18" rx="4" fill="#a3a3a3"/>
<use href="#bx" x="1100.500" y="155.500"/><use href="#bx" x="1109.500" y="164.500"/><path d="M1105 158l9 8" stroke="#174a7c"/>
<use href="#bx" x="1148.500" y="155.500"/><use href="#bx" x="1157.500" y="164.500"/><path d="M1155 158c4 0 6 2 7 6" stroke="#174a7c" fill="none"/>
<use href="#bx" x="1197.500" y="155.500"/><use href="#bx" x="1206.500" y="164.500"/><path d="M1205 158h3l-5 7h7" stroke="#174a7c" fill="none"/><circle cx="1209" cy="157" r="1" fill="#f0a030"/><circle cx="1198" cy="166" r="1" fill="#f0a030"/>
<use href="#bx" x="1245.500" y="155.500"/><use href="#bx" x="1254.500" y="164.500"/><path d="M1254 158h5v6" stroke="#174a7c" fill="none"/>
<use href="#bx" x="1293.500" y="155.500"/><use href="#bx" x="1302.500" y="164.500"/><path d="M1298 161c2 4 5-1 8 4" stroke="#174a7c" fill="none"/>
<text x="1108" y="182" class="s">Direct</text><text x="1156" y="182" class="s">Arc</text><text x="1204.500" y="182" class="s">Bezier</text><text x="1253" y="182" class="s">Smart</text><text x="1301" y="182" class="s">Curve</text>

<!-- labels -->
<text x="1105" y="223" class="p">Type</text><text x="1105" y="295" class="p">Type</text><text x="1105" y="343" class="p">Pattern</text><text x="1105" y="366" class="p">Weight</text><text x="1105" y="390" class="p">Corner rounding</text><text x="1105" y="433" class="p">Start</text><text x="1105" y="456" class="p">End</text><text x="1105" y="477" class="p">Size</text><text x="1105" y="523" class="p">Type</text>

<!-- selects -->
<g fill="#fff" stroke="#c4c4c4" stroke-width=".8" filter="url(#sh)">
<rect x="1202.500" y="213.500" width="173" height="18" rx="4"/><rect x="1202.500" y="283.500" width="173" height="18" rx="4"/><rect x="1202.500" y="329.500" width="173" height="18" rx="4"/><rect x="1202.500" y="376.500" width="173" height="18" rx="4"/><rect x="1202.500" y="420.500" width="173" height="18" rx="4"/><rect x="1202.500" y="443.500" width="173" height="18" rx="4"/><rect x="1202.500" y="510.500" width="173" height="18" rx="4"/>
</g>
<g fill="url(#sb)">
<path d="M1361 213h11a4 4 0 0 1 4 4v11a4 4 0 0 1-4 4h-11z"/><path d="M1361 283h11a4 4 0 0 1 4 4v11a4 4 0 0 1-4 4h-11z"/><path d="M1361 329h11a4 4 0 0 1 4 4v11a4 4 0 0 1-4 4h-11z"/><path d="M1361 376h11a4 4 0 0 1 4 4v11a4 4 0 0 1-4 4h-11z"/><path d="M1361 420h11a4 4 0 0 1 4 4v11a4 4 0 0 1-4 4h-11z"/><path d="M1361 443h11a4 4 0 0 1 4 4v11a4 4 0 0 1-4 4h-11z"/><path d="M1361 510h11a4 4 0 0 1 4 4v11a4 4 0 0 1-4 4h-11z"/>
</g>
<use href="#updn" x="1368.500" y="222"/><use href="#updn" x="1368.500" y="292"/><use href="#updn" x="1368.500" y="338"/><path d="M1366 384l2.500 2.500 2.500-2.500" fill="none" stroke="#fff" stroke-width="1.300"/><use href="#updn" x="1368.500" y="429"/><use href="#updn" x="1368.500" y="452"/><use href="#updn" x="1368.500" y="519"/>
<text x="1210" y="226" class="p">Solid</text><text x="1210" y="296" class="p">Line</text><text x="1210" y="389" class="p">0 in</text><text x="1210" y="433" class="p">None</text><text x="1210" y="523" class="p">No Shadow</text>
<path d="M1210 338.500h100" stroke="#333"/>
<path d="M1210 452.500h108" stroke="#333"/><path d="M1313 447l12 5.500-12 5.500 2-5.500z" fill="#333"/>

<!-- swatches -->
<rect x="1103.500" y="237.500" width="80" height="17" rx="3" fill="#fff" stroke="#9a9a9a" stroke-width=".8"/>
<path d="M1106 237h56v18h-56a3 3 0 0 1-3-3v-12a3 3 0 0 1 3-3z" fill="#a8117a"/><path d="M1147 244l3 3 3-3" fill="none" stroke="#222" stroke-width="1.300"/><use href="#wh" x="1172.500" y="246"/>
<rect x="1103.500" y="308.500" width="80" height="17" rx="3" fill="#fff" stroke="#9a9a9a" stroke-width=".8"/>
<path d="M1106 308h56v18h-56a3 3 0 0 1-3-3v-12a3 3 0 0 1 3-3z" fill="#a8117a"/><path d="M1147 315l3 3 3-3" fill="none" stroke="#222" stroke-width="1.300"/><use href="#wh" x="1172.500" y="316.500"/>

<!-- opacity sliders -->
<rect x="1205" y="244" width="112" height="3" rx="1.500" fill="#3f95f3"/><circle cx="1317.500" cy="245.500" r="5.500" fill="#fff" stroke="#c4c4c4" stroke-width=".8"/>
<rect x="1205" y="314" width="112" height="3" rx="1.500" fill="#3f95f3"/><circle cx="1317.500" cy="315.500" r="5.500" fill="#fff" stroke="#c4c4c4" stroke-width=".8"/>
<rect x="1325.500" y="235.500" width="38" height="18" fill="#fff" stroke="#c4c4c4"/><rect x="1325.500" y="305.500" width="38" height="19" fill="#fff" stroke="#c4c4c4"/>
<text x="1329" y="249" class="p">100%</text><text x="1329" y="319" class="p">100%</text>
<rect x="1366.500" y="236.500" width="9" height="18" rx="4.500" fill="#fff" stroke="#c4c4c4" stroke-width=".8"/><use href="#updd" x="1371" y="245.500"/>
<rect x="1366.500" y="306.500" width="9" height="18" rx="4.500" fill="#fff" stroke="#c4c4c4" stroke-width=".8"/><use href="#updd" x="1371" y="315.500"/>
<rect x="1203.500" y="352.500" width="38" height="18" fill="#fff" stroke="#c4c4c4"/><text x="1207" y="365" class="p">1 pt</text>
<rect x="1244.500" y="352.500" width="9" height="18" rx="4.500" fill="#fff" stroke="#c4c4c4" stroke-width=".8"/><use href="#updd" x="1249" y="361.500"/>

<!-- size slider -->
<rect x="1205" y="475" width="170" height="3" rx="1.500" fill="#bdbdbd"/>
<path d="M1208.500 465.500v2M1249.500 465.500v2M1289.500 465.500v2M1329.500 465.500v2M1369.500 465.500v2" stroke="#888"/>
<path d="M1208.500 468.500l5 5.500v3a3 3 0 0 1-3 3h-4a3 3 0 0 1-3-3v-3z" fill="#fff" stroke="#bdbdbd" stroke-width=".8"/>

<!-- make same -->
<rect x="1106" y="553" width="4" height="7" fill="#2c79b3"/><path d="M1103 560h10v4h-10z" fill="#2c79b3"/><path d="M1103 564h10l1 7h-12z" fill="#c69a6a"/><path d="M1103 568h11v3h-12z" fill="#2c79b3" opacity=".6"/>
<path d="M1148 555.500h17M1148 558.500h17" stroke="#5aa0e0" stroke-width=".8"/><path d="M1148 562.500h17" stroke="#b268d8" stroke-width="2" stroke-dasharray="2 1"/><path d="M1148 566.500h17" stroke="#2b4fd8" stroke-width="2"/>
<text x="1204.500" y="570" font-size="21" fill="#2b86b8" text-anchor="middle" style="font-family:'Liberation Serif',serif">A</text>
<text x="1108" y="582" class="s">Fill</text><text x="1156" y="582" class="s">Border</text><text x="1204.500" y="583" class="s">Text</text><text x="1204.500" y="594" class="s">Format</text>

<!-- status -->
<text x="13" y="718" class="st">Ready</text>
<text x="220" y="718" class="st" textLength="160" lengthAdjust="spacing">W: 1.20,  H: 0.80,  Angle: 0.00°</text>
<text x="547" y="718" class="st" textLength="84" lengthAdjust="spacing">M: [ 6.83, 3.60 ]</text>
<text x="802" y="718" class="st" textLength="57" lengthAdjust="spacing">ID: 321836</text>
</svg>
</body></html>
